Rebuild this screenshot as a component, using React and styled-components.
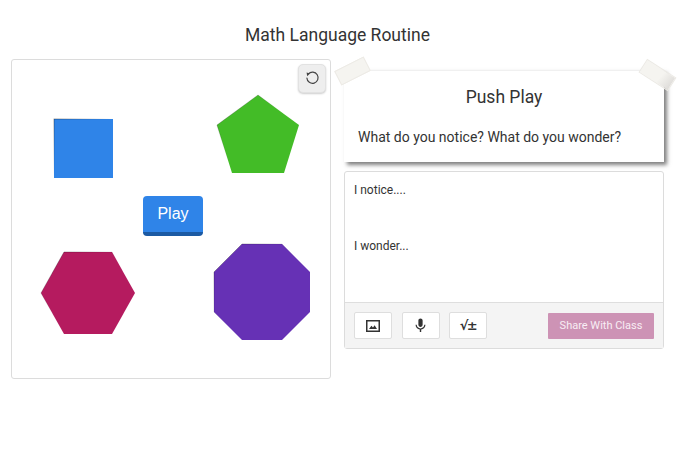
import React from "react";
import styled, { createGlobalStyle } from "styled-components";
import { MdMic } from "react-icons/md";

const GlobalStyle = createGlobalStyle`
  html, body {
    margin: 0;
    background: #ffffff;
    font-family: "Roboto", "Liberation Sans", sans-serif;
    color: #2b2b2b;
  }
  * {
    box-sizing: border-box;
  }
`;

function App() {
  return (
    <Page>
      <GlobalStyle />
      <Title>Math Language Routine</Title>
      <Columns>
        <Stage>
          <ShapeLayer viewBox="12 60 318 318">
            <defs>
              <linearGradient id="edge" x1="0" y1="0" x2="1" y2="1">
                <stop offset="0" stopColor="#000" stopOpacity="0.45" />
                <stop offset="0.5" stopColor="#000" stopOpacity="0" />
              </linearGradient>
            </defs>
            <rect x="54" y="119" width="59" height="59" fill="#2f84e8" />
            <polygon points="258,95 299,125 284,173 232,173 217,125" fill="#43bc27" />
            <polygon points="41,293 64,252 112,252 135,293 112,334 64,334" fill="#b51b5f" />
            <polygon
              points="214,272 242,244 282,244 310,272 310,312 282,340 242,340 214,312"
              fill="#6631b5"
            />
          </ShapeLayer>
          <ResetButton aria-label="Reset">
            <svg width="15" height="15" viewBox="0 0 15 15" fill="none">
              <path
                d="M3.4 2.9 A5.6 5.6 0 1 1 1.9 7"
                stroke="#454545"
                strokeWidth="1.2"
                strokeLinecap="round"
              />
              <path d="M1.6 1.6 L5 2.4 L2.2 5.2 Z" fill="#454545" />
            </svg>
          </ResetButton>
          <PlayButton>Play</PlayButton>
        </Stage>
        <Side>
          <NoteCard>
            <Tape $side="left" />
            <Tape $side="right" />
            <NoteTitle>Push Play</NoteTitle>
            <NoteText>What do you notice? What do you wonder?</NoteText>
          </NoteCard>
          <Editor>
            <EditorBody>
              <EditorLine>I notice....</EditorLine>
              <EditorLine>I wonder...</EditorLine>
            </EditorBody>
            <Toolbar>
              <ToolButton aria-label="Image">
                <svg width="14" height="12" viewBox="0 0 14 12" fill="none">
                  <rect x="0.75" y="0.75" width="12.5" height="10.5" stroke="#333" strokeWidth="1.5" />
                  <path d="M3 9 L5.4 5.8 L7 7.6 L8.6 5.2 L11 9 Z" fill="#333" />
                </svg>
              </ToolButton>
              <ToolButton aria-label="Microphone">
                <MdMic size={17} color="#333" />
              </ToolButton>
              <ToolButton aria-label="Math">
                <MathGlyph>√±</MathGlyph>
              </ToolButton>
              <ShareButton>Share With Class</ShareButton>
            </Toolbar>
          </Editor>
        </Side>
      </Columns>
    </Page>
  );
}

export default App;

//Styles
const Page = styled.div`
  width: 684px;
  height: 460px;
  padding: 0 20px 0 11px;
  overflow: hidden;
`;

const Title = styled.h1`
  margin: 0;
  height: 59px;
  padding: 24px 0 0;
  font-size: 17.5px;
  line-height: 22px;
  font-weight: 400;
  color: #333333;
  text-align: center;
`;

const Columns = styled.div`
  display: flex;
  gap: 13px;
`;

const Stage = styled.div`
  position: relative;
  width: 320px;
  height: 320px;
  border: 1px solid #dcdcdc;
  border-radius: 3px;
`;

const ShapeLayer = styled.svg`
  display: block;
  width: 318px;
  height: 318px;

  rect,
  polygon {
    stroke: url(#edge);
    stroke-width: 0.8;
  }
`;

const ResetButton = styled.button`
  position: absolute;
  top: 4px;
  right: 4px;
  display: flex;
  align-items: center;
  justify-content: center;
  width: 28px;
  height: 29px;
  padding: 0;
  border: 1px solid #e2e2e2;
  border-radius: 5px;
  background: #eeeeee;
  box-shadow: 0 1px 2px rgba(0, 0, 0, 0.2);
`;

const PlayButton = styled.button`
  position: absolute;
  top: 136px;
  left: 131px;
  width: 60px;
  height: 40px;
  padding: 0;
  border: 0;
  border-bottom: 4px solid #1c5aa3;
  border-radius: 4px;
  background: #2f84e8;
  color: #ffffff;
  font-family: "Liberation Sans", Arial, sans-serif;
  font-size: 16px;
`;

const Side = styled.div`
  display: flex;
  flex-direction: column;
  gap: 9px;
  width: 320px;
  padding-top: 11px;
`;

const NoteCard = styled.div`
  position: relative;
  height: 92px;
  padding: 15px 14px 0;
  background: #ffffff;
  border-top: 1px solid #f0f0f0;
  box-shadow: 3px 3px 4px rgba(0, 0, 0, 0.5);
`;

const Tape = styled.span`
  position: absolute;
  width: ${(p) => (p.$side === "left" ? "33px" : "35px")};
  height: 16px;
  border: 1px solid #eceae5;
  background: ${(p) =>
    p.$side === "left" ? "#f5f4f0" : "linear-gradient(100deg, #f5f4f0 60%, #dedcd9)"};
  top: ${(p) => (p.$side === "left" ? "-8px" : "-4px")};
  left: ${(p) => (p.$side === "left" ? "-8px" : "296px")};
  transform: rotate(${(p) => (p.$side === "left" ? "-27deg" : "33deg")});
`;

const NoteTitle = styled.h2`
  margin: 0 0 19px;
  font-size: 17.5px;
  line-height: 22px;
  font-weight: 400;
  color: #333333;
  text-align: center;
`;

const NoteText = styled.p`
  margin: 0;
  font-size: 14px;
  line-height: 20px;
  font-weight: 400;
  color: #333333;
`;

const Editor = styled.div`
  display: flex;
  flex-direction: column;
  height: 178px;
  border: 1px solid #dcdcdc;
  border-radius: 3px;
`;

const EditorBody = styled.div`
  flex: 1;
  display: flex;
  flex-direction: column;
  gap: 36px;
  padding: 8px 9px 0;
`;

const EditorLine = styled.p`
  margin: 0;
  font-size: 12px;
  line-height: 20px;
  font-weight: 400;
  color: #333333;
`;

const Toolbar = styled.div`
  display: flex;
  align-items: center;
  gap: 9.5px;
  height: 46px;
  padding: 0 9px;
  background: #f4f4f4;
  border-top: 1px solid #dedede;
`;

const ToolButton = styled.button`
  display: flex;
  align-items: center;
  justify-content: center;
  width: 38px;
  height: 27px;
  padding: 0;
  border: 1px solid #dedede;
  border-radius: 2px;
  background: #ffffff;
`;

const MathGlyph = styled.span`
  font-family: "DejaVu Sans", sans-serif;
  font-size: 13px;
  font-weight: 700;
  letter-spacing: -1.5px;
  color: #333333;
`;

const ShareButton = styled.button`
  width: 106px;
  height: 26px;
  margin-left: auto;
  padding: 0;
  border: 0;
  border-radius: 1px;
  background: #cd93b5;
  color: #f8eef4;
  font-family: "Roboto", "Liberation Sans", sans-serif;
  font-size: 11px;
  font-weight: 400;
`;
